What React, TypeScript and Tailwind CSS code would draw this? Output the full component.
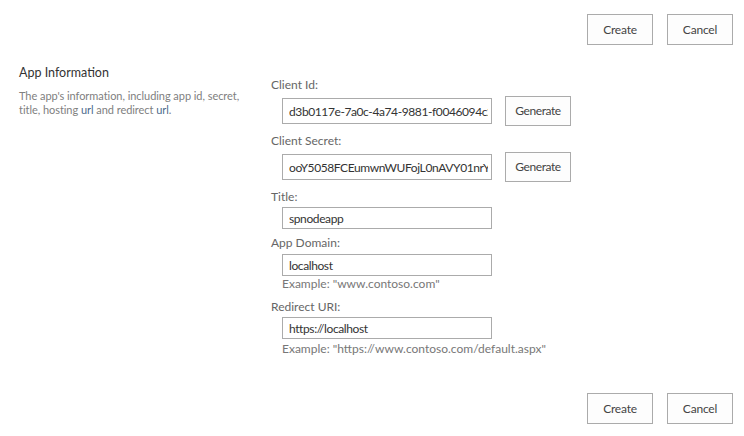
import type { ReactNode } from "react";

const FONT = "font-['Segoe_UI','Lato','Open_Sans',sans-serif]";

function ActionButton({ children }: { children: ReactNode }) {
  return (
    <button
      type="button"
      className="h-[31px] min-w-[66px] px-[10px] border border-[#ababab] bg-[#fdfdfd] text-[12px] tracking-[-0.2px] text-[#444] leading-none"
    >
      {children}
    </button>
  );
}

function GenerateButton() {
  return (
    <button
      type="button"
      className="ml-[13px] h-[30px] w-[66px] border border-[#ababab] bg-[#fdfdfd] text-[12px] tracking-[-0.4px] text-[#444]"
    >
      Generate
    </button>
  );
}

function FieldLabel({ children, className = "" }: { children: ReactNode; className?: string }) {
  return <div className={`h-[18px] text-[12px] leading-[18px] text-[#666] ${className}`}>{children}</div>;
}

function TextBox({ value, tall = false }: { value: string; tall?: boolean }) {
  return (
    <input
      readOnly
      value={value}
      className={`ml-[11px] w-[210px] ${tall ? "h-[26px]" : "h-[22px]"} border border-[#ababab] bg-white pl-[6px] pr-[3px] text-[12px] tracking-[-0.4px] text-[#333] outline-none`}
    />
  );
}

function Hint({ children, className = "" }: { children: ReactNode; className?: string }) {
  return <div className={`ml-[11px] h-[16px] text-[12px] leading-[16px] text-[#777] ${className}`}>{children}</div>;
}

function ButtonBar() {
  return (
    <div className="flex justify-end gap-[14px] pr-[11px]">
      <ActionButton>Create</ActionButton>
      <ActionButton>Cancel</ActionButton>
    </div>
  );
}

export default function App() {
  return (
    <div className={`w-[744px] h-[436px] bg-white pt-[14px] ${FONT}`}>
      <ButtonBar />

      {/* Section: description on the left, form fields on the right */}
      <div className="mt-[19px] flex">
        <div className="w-[271px] shrink-0 pl-[19px] pr-[30px]">
          <h2 className="text-[12.5px] leading-[18px] text-[#333]">App Information</h2>
          <p className="mt-[7px] text-[11px] tracking-[-0.05px] leading-[14px] text-[#808080]">
            The app's information, including app id, secret, title, hosting{" "}
            <span className="text-[#4a6a8c]">url</span> and redirect <span className="text-[#4a6a8c]">url</span>.
          </p>
        </div>

        <div className="pt-[12px]">
          <FieldLabel>Client Id:</FieldLabel>
          <div className="mt-[2px] flex h-[30px] items-center">
            <TextBox tall value="d3b0117e-7a0c-4a74-9881-f0046094c2a1" />
            <GenerateButton />
          </div>

          <FieldLabel className="mt-[6px]">Client Secret:</FieldLabel>
          <div className="mt-[2px] flex h-[30px] items-center">
            <TextBox tall value="ooY5058FCEumwnWUFojL0nAVY01nrYxQ8kV2R3bU=" />
            <GenerateButton />
          </div>

          <FieldLabel className="mt-[6px]">Title:</FieldLabel>
          <div className="mt-[1px] flex">
            <TextBox value="spnodeapp" />
          </div>

          <FieldLabel className="mt-[5px]">App Domain:</FieldLabel>
          <div className="mt-[2px] flex">
            <TextBox value="localhost" />
          </div>
          <Hint>Example: "www.contoso.com"</Hint>

          <FieldLabel className="mt-[6px]">Redirect URI:</FieldLabel>
          <div className="mt-[1px] flex">
            <TextBox value="https://localhost" />
          </div>
          <Hint className="mt-[2px]">Example: "https://www.contoso.com/default.aspx"</Hint>
        </div>
      </div>

      <div className="mt-[36px]">
        <ButtonBar />
      </div>
    </div>
  );
}
